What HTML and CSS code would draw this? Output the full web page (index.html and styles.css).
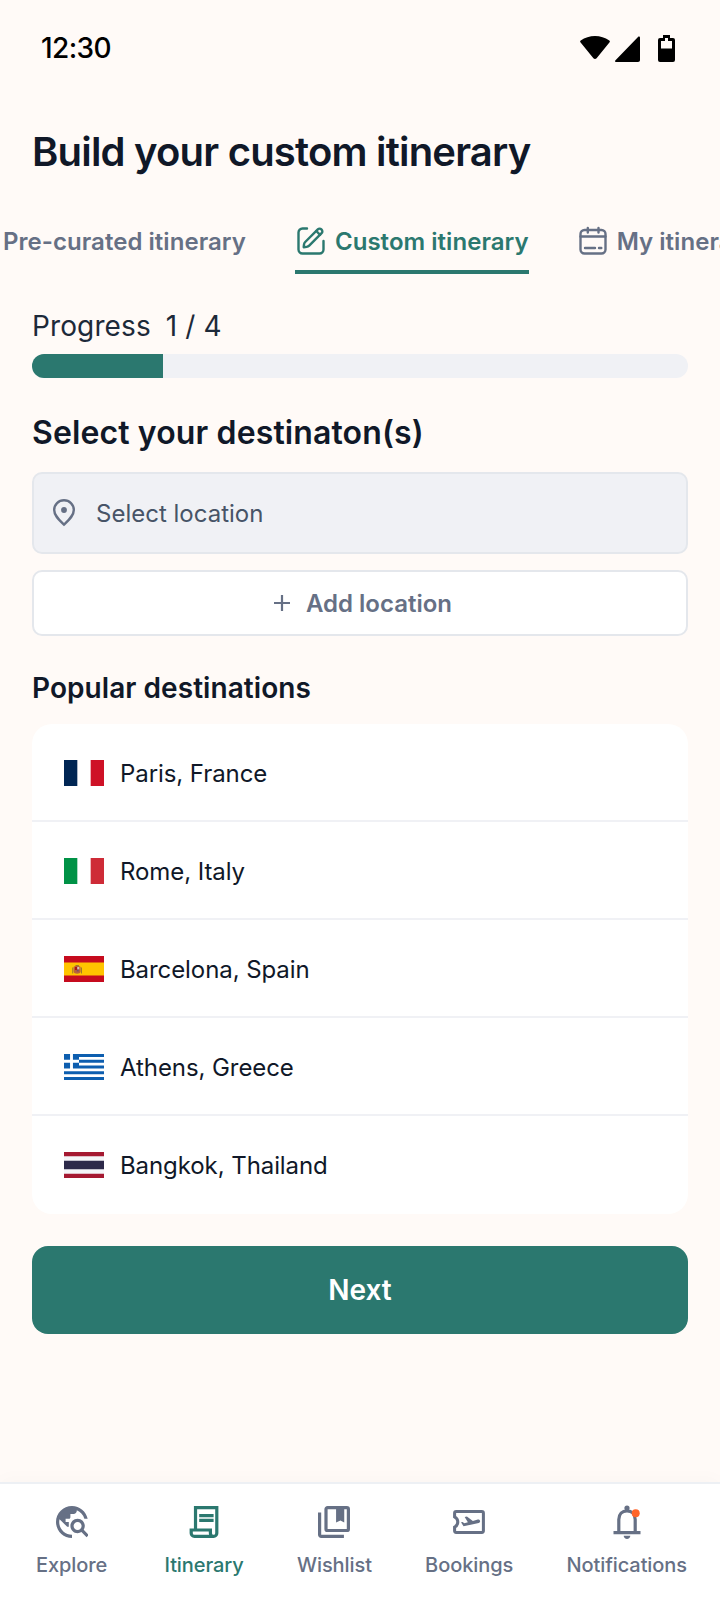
FILE: index.html
```html
<!DOCTYPE html>
<html lang="en">
<head>
  <meta charset="UTF-8">
  <meta name="viewport" content="width=device-width, initial-scale=1.0">
  <title>Build your custom itinerary</title>
  <link rel="stylesheet" href="styles.css">
</head>
<body>

  <div class="screen">

    <!-- Status bar -->
    <div class="status-bar">
      <span class="time">12:30</span>
      <div class="status-icons">
        <svg class="wifi" width="30" height="24" viewBox="0 0 30 24"><path d="M.6 6.400C-.1 5.800 0 5 .7 4.500 5 1.500 9.700 0 15 0s10 1.500 14.300 4.500c.7.5.8 1.300.1 1.900L16.600 22.200c-.9 1.100-2.300 1.100-3.200 0z"/></svg>
        <svg class="signal" width="25" height="26" viewBox="0 0 25 26"><path d="M.5 24.200 23 1c.9-.9 2-.4 2 .8V24c0 1.300-.7 2-2 2H1.300C0 26-.4 25.100.5 24.200z"/></svg>
        <svg class="battery" width="17" height="27" viewBox="0 0 17 27"><path fill-rule="evenodd" d="M5 0h7v3h3a2 2 0 0 1 2 2v20a2 2 0 0 1-2 2H2a2 2 0 0 1-2-2V5a2 2 0 0 1 2-2h3zM7 3v3H3v7.500h11V6h-4V3z"/></svg>
      </div>
    </div>

    <h1>Build your custom itinerary</h1>

    <!-- Tabs -->
    <div class="tabs">
      <div class="tab">Pre-curated itinerary</div>
      <div class="tab active">
        <svg width="32" height="32" viewBox="0 0 32 32" fill="none" stroke="currentColor" stroke-width="2.400" stroke-linecap="round" stroke-linejoin="round">
          <path d="M12 3.500H7.500a4 4 0 0 0-4 4v17a4 4 0 0 0 4 4h17a4 4 0 0 0 4-4V16"/>
          <path d="M9 19.500c.1-1 .5-1.800 1.200-2.500L22.800 4.400c1-1 2.600-1 3.600 0l.2.200c1 1 1 2.600 0 3.600L14.200 20.700c-.7.7-1.500 1.100-2.500 1.200l-3 .3z"/>
          <path d="m21.300 6 3.800 3.800"/>
        </svg>
        <span>Custom itinerary</span>
      </div>
      <div class="tab">
        <svg width="32" height="32" viewBox="0 0 32 32" fill="none" stroke="currentColor" stroke-width="2.400" stroke-linecap="round" stroke-linejoin="round">
          <rect x="2.500" y="5" width="25" height="23.500" rx="4"/>
          <path d="M2.500 11.500h25M9.800 3v4.500M20.500 3v4.500M7 23H17M21 23h2.300"/>
        </svg>
        <span>My itineraries</span>
      </div>
    </div>

    <div class="content">
      <!-- Progress -->
      <div class="progress-label"><span>Progress</span><span>1 / 4</span></div>
      <div class="progress-bar"><div class="progress-fill" style="width: 20%"></div></div>

      <h2>Select your destinaton(s)</h2>

      <div class="location-input">
        <svg width="24" height="28" viewBox="0 0 24 28">
          <path d="M12 1.300c-5.500 0-9.800 4.100-9.800 9.600 0 5.700 4.800 9.800 9.800 14.700 5-4.900 9.800-9 9.800-14.700 0-5.500-4.300-9.600-9.800-9.600z" fill="none" stroke="currentColor" stroke-width="2.400"/>
          <circle cx="12" cy="11" r="2.900" fill="currentColor"/>
        </svg>
        <span>Select location</span>
      </div>

      <button class="add-location">
        <svg width="16" height="16" viewBox="0 0 16 16"><path d="M8 0v16M0 8h16" stroke="currentColor" stroke-width="2.200"/></svg>
        Add location
      </button>

      <!-- Popular destinations -->
      <h3>Popular destinations</h3>
      <ul class="destinations">
        <li>
          <svg class="flag" viewBox="0 0 40 26"><path fill="#fff" d="M0 0h40v26H0z"/><path fill="#002654" d="M0 0h13.330v26H0z"/><path fill="#ce1126" d="M26.670 0H40v26H26.670z"/></svg>
          Paris, France
        </li>
        <li>
          <svg class="flag" viewBox="0 0 40 26"><path fill="#fff" d="M0 0h40v26H0z"/><path fill="#009246" d="M0 0h13.330v26H0z"/><path fill="#ce2b37" d="M26.670 0H40v26H26.670z"/></svg>
          Rome, Italy
        </li>
        <li>
          <svg class="flag" viewBox="0 0 40 26">
            <path fill="#c60b1e" d="M0 0h40v26H0z"/><path fill="#ffc400" d="M0 6.500h40v13H0z"/>
            <path fill="#9b7a2c" d="M8.200 11.500h1v6h-1zM17 11.500h1v6h-1zM11.500 9h3.400v1.600h-3.400z"/>
            <path fill="#b9603c" d="M9.600 11c1-1.200 6-1.200 7 0v4.500c0 3-7 3-7 0z"/>
            <path fill="#ad1519" d="M11 11h2v3h-2z"/><path fill="#d8c3b4" d="M13.300 11h2v2.500h-2z"/><path fill="#7b4868" d="M12.700 13.500h2v2h-2z"/>
          </svg>
          Barcelona, Spain
        </li>
        <li>
          <svg class="flag" viewBox="0 0 40 26">
            <path fill="#0d5eaf" d="M0 0h40v26H0z"/>
            <path stroke="#fff" stroke-width="2.890" d="M15 4.330h25M15 10.110h25M0 15.890h40M0 21.670h40M0 7.220h15M7.500 0v14.440"/>
          </svg>
          Athens, Greece
        </li>
        <li>
          <svg class="flag" viewBox="0 0 40 26"><path fill="#a51931" d="M0 0h40v26H0z"/><path fill="#f4f5f8" d="M0 4.330h40v17.340H0z"/><path fill="#2d2a4a" d="M0 8.670h40v8.660H0z"/></svg>
          Bangkok, Thailand
        </li>
      </ul>

      <button class="next">Next</button>
    </div>

    <!-- Bottom navigation -->
    <nav class="bottom-nav">
      <div class="nav-item">
        <svg width="32" height="32" viewBox="2 2 20 20" fill="currentColor"><path d="M19.300 16.900c.4-.7.7-1.500.7-2.400 0-2.500-2-4.500-4.500-4.500S11 12 11 14.500s2 4.500 4.500 4.500c.9 0 1.700-.3 2.400-.7l3.200 3.200 1.400-1.400-3.200-3.200zm-3.800.1c-1.400 0-2.500-1.100-2.500-2.500s1.100-2.500 2.500-2.500 2.500 1.100 2.500 2.500-1.100 2.500-2.500 2.500zM12 20v2C6.480 22 2 17.520 2 12S6.480 2 12 2c4.840 0 8.870 3.440 9.800 8h-2.070c-.64-2.460-2.400-4.470-4.730-5.410V5c0 1.100-.9 2-2 2h-2v2c0 .55-.45 1-1 1H8v2h2v3H9l-4.790-4.790C4.080 10.790 4 11.380 4 12c0 4.410 3.590 8 8 8z"/></svg>
        <span>Explore</span>
      </div>
      <div class="nav-item active">
        <svg width="32" height="32" viewBox="2 2 20 20" fill="none" stroke="currentColor" stroke-width="2"><path d="M6.700 16V3H20v16a2 2 0 0 1-2 2H6a2 2 0 0 1-2-2v-2h12v2a2 2 0 0 0 2 2M9 8h9M9 11h9"/></svg>
        <span>Itinerary</span>
      </div>
      <div class="nav-item">
        <svg width="32" height="32" viewBox="2 2 20 20" fill="currentColor"><path fill-rule="evenodd" d="M8 2h12a2 2 0 0 1 2 2v12.300a2 2 0 0 1-2 2H8a2 2 0 0 1-2-2V4c0-1.100.9-2 2-2zm0 2v12.300h12V4h-1.600v8.300L16 11l-2.700 1.300V4z"/><path d="M4 6H2v14c0 1.100.9 2 2 2h14.200v-2H4z"/></svg>
        <span>Wishlist</span>
      </div>
      <div class="nav-item">
        <svg width="32" height="32" viewBox="2 2 20 20">
          <path d="M4 5.500h16c.6 0 1 .4 1 1v11c0 .6-.4 1-1 1H4c-.6 0-1-.4-1-1v-2.300c1.100-.6 2-1.700 2-3.200s-.9-2.600-2-3.200V6.500c0-.6.4-1 1-1z" fill="none" stroke="currentColor" stroke-width="1.900"/>
          <path transform="translate(.2 .5)" fill="currentColor" d="M18.700 10.700c-.2-.6-.8-.9-1.400-.8l-3.100.9-3.700-2.700-1.400.3 2 3.300-2.200.6-1.100-.8-1 .2 1.600 2.500 9.500-2.100c.6-.2 1-.8.800-1.400z"/>
        </svg>
        <span>Bookings</span>
      </div>
      <div class="nav-item">
        <svg class="bell" width="32" height="36" viewBox="0 0 32 36">
          <path d="M7.800 28V15.500c0-5.500 3.500-8.700 8.200-8.700s8.200 3.200 8.200 8.700V28M2.500 28.700h27" fill="none" stroke="currentColor" stroke-width="3.200"/>
          <circle cx="16" cy="4" r="2.600" fill="currentColor"/>
          <path d="M12.700 31.800h6.600c0 1.900-1.500 3.200-3.300 3.200s-3.300-1.300-3.300-3.200z" fill="currentColor"/>
          <circle cx="24.700" cy="9.300" r="4" fill="#ff6429"/>
        </svg>
        <span>Notifications</span>
      </div>
    </nav>

  </div>

</body>
</html>
```
FILE: styles.css
```css
* {
  box-sizing: border-box;
}

body {
  margin: 0;
  font-family: Inter, sans-serif;
  background-color: #fffaf7;
  color: #101828;
}

svg {
  display: block;
  flex-shrink: 0;
}

.screen {
  width: 720px;
  height: 1600px;
  display: flex;
  flex-direction: column;
  overflow: hidden;
}

.status-bar {
  display: flex;
  justify-content: space-between;
  align-items: center;
  height: 96px;
  padding: 0 45px 0 41px;
  color: #000;
}

.time {
  font-size: 28px;
  font-weight: 500;
  letter-spacing: -0.6px;
}

.status-icons {
  display: flex;
  align-items: center;
}

.signal {
  margin-left: 5px;
  margin-top: 1px;
}

.battery {
  margin-left: 18px;
}

h1, h2, h3 {
  margin: 0;
  font-weight: 600;
}

h1 {
  margin: 28px 32px 0;
  font-size: 40px;
  line-height: 56px;
  letter-spacing: -0.8px;
}

.tabs {
  display: flex;
  gap: 49px;
  margin-top: 38px;
  padding-left: 3px;
  height: 56px;
}

.tab {
  display: flex;
  align-items: center;
  gap: 8px;
  flex-shrink: 0;
  padding-bottom: 6px;
  border-bottom: 4px solid transparent;
  font-size: 24px;
  font-weight: 600;
  letter-spacing: 0.04px;
  color: #667085;
  white-space: nowrap;
}

.tab:last-child {
  gap: 7px;
}

.tab.active {
  color: #2b786f;
  border-bottom-color: #2b786f;
}

.content {
  flex: 1;
  padding: 32px 32px 0;
}

.progress-label {
  display: flex;
  gap: 15px;
  font-size: 28px;
  line-height: 40px;
  letter-spacing: 0.12px;
  color: #1d2939;
}

.progress-bar {
  height: 24px;
  margin-top: 8px;
  border-radius: 12px;
  background-color: #f0f1f5;
  overflow: hidden;
}

.progress-fill {
  height: 100%;
  background-color: #2b786f;
}

h2 {
  margin-top: 32px;
  font-size: 32px;
  line-height: 46px;
  letter-spacing: 0.12px;
}

.location-input {
  display: flex;
  align-items: center;
  gap: 20px;
  height: 82px;
  margin-top: 16px;
  padding: 0 18px;
  border: 2px solid #e4e7ec;
  border-radius: 10px;
  background-color: #f0f1f5;
  font-size: 24px;
  color: #475467;
}

.location-input svg {
  color: #667085;
}

button {
  display: flex;
  align-items: center;
  justify-content: center;
  width: 100%;
  font-family: inherit;
  font-weight: 600;
}

.add-location {
  gap: 16px;
  height: 66px;
  margin-top: 16px;
  padding: 0 0 0 6px;
  border: 2px solid #e4e7ec;
  border-radius: 10px;
  background-color: #fff;
  font-size: 24px;
  color: #667085;
}

h3 {
  margin-top: 32px;
  font-size: 28px;
  line-height: 40px;
  letter-spacing: 0.06px;
}

.destinations {
  margin: 16px 0 0;
  padding: 0;
  list-style: none;
  border-radius: 20px;
  background-color: #fff;
}

.destinations li {
  display: flex;
  align-items: center;
  gap: 16px;
  height: 98px;
  padding: 2px 32px 0;
  border-bottom: 2px solid #f0f1f5;
  font-size: 24px;
  letter-spacing: -0.08px;
}

.destinations li:last-child {
  border-bottom-color: transparent;
}

.flag {
  width: 40px;
  height: 26px;
}

.next {
  height: 88px;
  margin-top: 32px;
  border: none;
  border-radius: 16px;
  background-color: #2b786f;
  font-size: 28px;
  color: #fff;
}

.bottom-nav {
  display: flex;
  justify-content: space-between;
  height: 118px;
  padding: 22px 33px 0 36px;
  border-top: 2px solid #edf0f4;
  background-color: #fff;
  box-shadow: 0 -4px 16px rgba(16, 24, 40, 0.02);
}

.nav-item {
  display: flex;
  flex-direction: column;
  align-items: center;
  gap: 15px;
  font-size: 20px;
  font-weight: 450;
  line-height: 24px;
  letter-spacing: -0.08px;
  color: #667085;
}

.nav-item:first-child {
  margin-right: 4px;
}

.nav-item.active {
  color: #2b786f;
}

.bell {
  margin: -2px 0;
}
```
